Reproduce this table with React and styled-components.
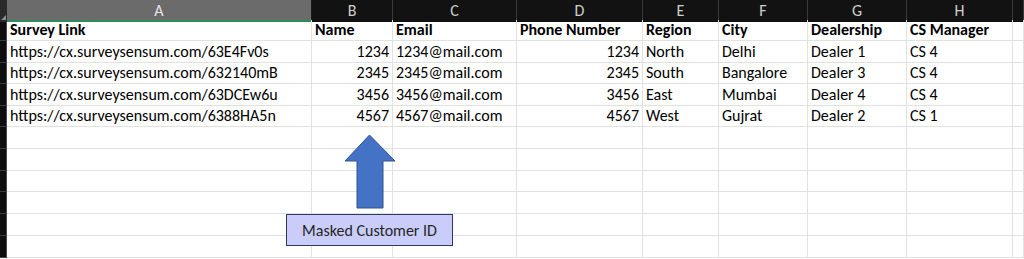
import styled, { createGlobalStyle } from "styled-components";

const GlobalStyle = createGlobalStyle`
  html, body {
    margin: 0;
    padding: 0;
    background: #ffffff;
  }
  body {
    font-family: Carlito, Lato, "Liberation Sans", sans-serif;
  }
`;

const COLUMNS = "7px 305px 81px 124px 126px 76px 89px 99px 106px 1fr";
const LETTERS = ["A", "B", "C", "D", "E", "F", "G", "H", ""];
const ROW_HEIGHTS = [21, 22, 21, 22, 21, 22, 22, 21, 22, 22, 22];

const rows = [
  ["https://cx.surveysensum.com/63E4Fv0s", "1234", "1234@mail.com", "1234", "North", "Delhi", "Dealer 1", "CS 4"],
  ["https://cx.surveysensum.com/632140mB", "2345", "2345@mail.com", "2345", "South", "Bangalore", "Dealer 3", "CS 4"],
  ["https://cx.surveysensum.com/63DCEw6u", "3456", "3456@mail.com", "3456", "East", "Mumbai", "Dealer 4", "CS 4"],
  ["https://cx.surveysensum.com/6388HA5n", "4567", "4567@mail.com", "4567", "West", "Gujrat", "Dealer 2", "CS 1"],
];

const headers = ["Survey Link", "Name", "Email", "Phone Number", "Region", "City", "Dealership", "CS Manager"];
const numeric = [false, true, false, true, false, false, false, false];

const Sheet = styled.div`
  position: relative;
  width: 1024px;
  height: 259px;
  overflow: hidden;
  background: #ffffff;
`;

const Row = styled.div`
  display: grid;
  grid-template-columns: ${COLUMNS};
  height: ${(p) => p.$h}px;
`;

const Corner = styled.div`
  position: relative;
  background: #2a2a2a;
  &::after {
    content: "";
    position: absolute;
    right: 1px;
    bottom: 2px;
    border-left: 5px solid transparent;
    border-bottom: 5px solid #8c8c8c;
  }
`;

const ColHead = styled.div`
  display: flex;
  align-items: center;
  justify-content: center;
  box-sizing: border-box;
  background: ${(p) => (p.$active ? "#6b6b6b" : "#121212")};
  color: ${(p) => (p.$active ? "#e6e6e6" : "#cfcfcf")};
  border-right: 1px solid ${(p) => (p.$active ? "#1a1a1a" : "#3a3a3a")};
  border-bottom: 2px solid ${(p) => (p.$active ? "#2e8b57" : "#121212")};
  font-size: 16px;
  padding-top: 1px;
`;

const RowHead = styled.div`
  background: #0e0e0e;
  box-sizing: border-box;
  border-bottom: 1px solid #3c3c3c;
  border-right: 1px solid #4a4a4a;
`;

const Cell = styled.div`
  display: flex;
  align-items: flex-end;
  justify-content: ${(p) => (p.$num ? "flex-end" : "flex-start")};
  box-sizing: border-box;
  border-right: 1px solid #e1e1e1;
  border-bottom: 1px solid #e1e1e1;
  padding: 0 3px 1px 3px;
  font-size: 16px;
  line-height: 18px;
  font-weight: ${(p) => (p.$bold ? 700 : 400)};
  color: #000000;
  white-space: nowrap;
  overflow: hidden;
`;

const Arrow = styled.svg`
  position: absolute;
  left: 344px;
  top: 134px;
`;

const Callout = styled.div`
  position: absolute;
  left: 286px;
  top: 214px;
  width: 167px;
  height: 32px;
  box-sizing: border-box;
  display: flex;
  align-items: center;
  justify-content: center;
  background: #cacdfa;
  border: 1.5px solid #2f3b5e;
  color: #262626;
  font-size: 16px;
`;

export default function App() {
  const body = Array.from({ length: 11 }, (_, i) => rows[i - 1] || (i === 0 ? headers : null));
  return (
    <>
      <GlobalStyle />
      <Sheet>
        <Row $h={20}>
          <Corner />
          {LETTERS.map((l, i) => (
            <ColHead key={i} $active={l === "A"}>
              {l}
            </ColHead>
          ))}
        </Row>
        {body.map((r, i) => (
          <Row key={i} $h={ROW_HEIGHTS[i]}>
            <RowHead />
            {Array.from({ length: 9 }, (_, c) => (
              <Cell key={c} $num={numeric[c] && i > 0} $bold={i === 0}>
                {r && r[c]}
              </Cell>
            ))}
          </Row>
        ))}
        <Arrow width="53" height="76" viewBox="0 0 53 76">
          <polygon
            points="25.5,1 1,27 13,27 13,74 39,74 39,27 51,27"
            fill="#4472c4"
            stroke="#2f528f"
            strokeWidth="1"
          />
        </Arrow>
        <Callout>Masked Customer ID</Callout>
      </Sheet>
    </>
  );
}
